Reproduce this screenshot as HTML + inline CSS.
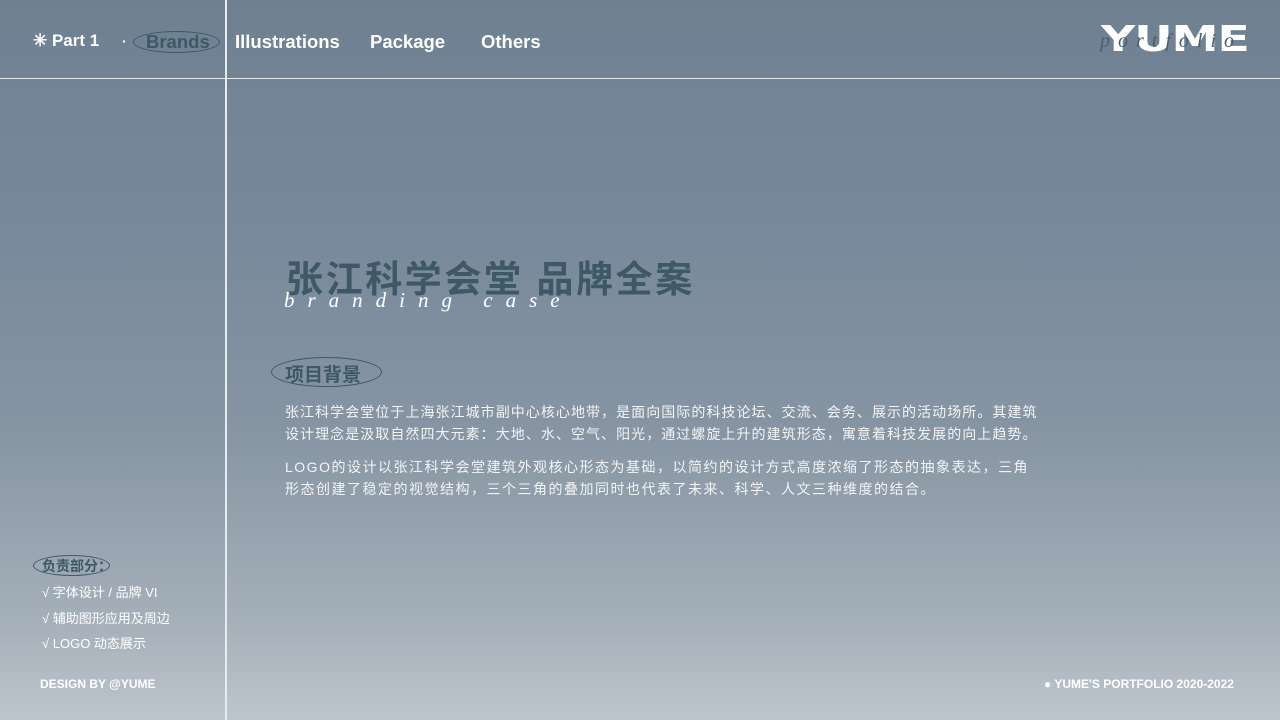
<!DOCTYPE html>
<html><head><meta charset="utf-8"><style>
*{margin:0;padding:0;box-sizing:border-box}
body{width:1280px;height:720px;overflow:hidden;position:relative;font-family:"Liberation Sans","Noto Sans CJK SC",sans-serif;background:linear-gradient(180deg,#6f8191 0%,#76889a 30%,#8795a3 60%,#a3aeb8 85%,#bdc5cc 100%);color:#fff}
.vl{position:absolute;left:225px;top:0;width:2px;height:720px;background:#e6ebef}
.hl{position:absolute;left:0;top:78px;width:1280px;height:1px;background:#e6ebef}
.nav{position:absolute;top:31px;font-weight:bold;font-size:18.5px;white-space:nowrap}
.b{color:#3e5866}
.ell{position:absolute;border:1px solid #3e5866;border-radius:50%}
.t{position:absolute;white-space:nowrap}
</style></head><body>
<div class="vl"></div><div class="hl"></div>
<div class="nav" style="left:33px;font-size:17px">✳ Part 1</div>
<div class="nav" style="left:122px;font-size:14px;top:33px">·</div>
<div class="ell" style="left:133px;top:31px;width:87px;height:22px"></div>
<div class="nav b" style="left:146px">Brands</div>
<div class="nav" style="left:235px">Illustrations</div>
<div class="nav" style="left:370px">Package</div>
<div class="nav" style="left:481px">Others</div>
<div class="t" style="left:1101px;top:20px;font-size:36px;font-weight:900;letter-spacing:-1px;font-family:'DejaVu Sans','Liberation Sans',sans-serif;transform:scaleX(1.32);transform-origin:left;line-height:40px">YUME</div>
<div class="t" style="left:1100px;top:30px;font-size:20px;font-style:italic;color:#4a6070;letter-spacing:8px;font-family:'Liberation Serif',serif">portfolio</div>
<div class="t b" style="left:286px;top:249px;font-size:37px;font-weight:bold;letter-spacing:2.6px">张江科学会堂 品牌全案</div>
<div class="t" style="left:284px;top:288px;font-size:21px;font-style:italic;letter-spacing:13px;font-family:'Liberation Serif',serif">branding case</div>
<div class="ell" style="left:271px;top:357px;width:111px;height:30px"></div>
<div class="t b" style="left:285px;top:360px;font-size:19px;font-weight:bold">项目背景</div>
<div class="t" style="left:285px;top:401px;font-size:14px;line-height:22px;letter-spacing:1.05px;color:#f2f4f6">张江科学会堂位于上海张江城市副中心核心地带，是面向国际的科技论坛、交流、会务、展示的活动场所。其建筑<br>设计理念是汲取自然四大元素：大地、水、空气、阳光，通过螺旋上升的建筑形态，寓意着科技发展的向上趋势。</div>
<div class="t" style="left:285px;top:456px;font-size:14px;line-height:22px;letter-spacing:1.5px;color:#f2f4f6">LOGO的设计以张江科学会堂建筑外观核心形态为基础，以简约的设计方式高度浓缩了形态的抽象表达，三角<br>形态创建了稳定的视觉结构，三个三角的叠加同时也代表了未来、科学、人文三种维度的结合。</div>
<div class="ell" style="left:33px;top:555px;width:77px;height:21px"></div>
<div class="t b" style="left:42px;top:556px;font-size:14px;font-weight:bold">负责部分：</div>
<div class="t" style="left:42px;top:580px;font-size:13px;line-height:25.5px">√ 字体设计 / 品牌 VI<br>√ 辅助图形应用及周边<br>√ LOGO 动态展示</div>
<div class="t" style="left:40px;top:677px;font-size:12px;font-weight:bold">DESIGN BY @YUME</div>
<div class="t" style="left:1044px;top:677px;font-size:12px;font-weight:bold">● YUME'S PORTFOLIO 2020-2022</div>
</body></html>
